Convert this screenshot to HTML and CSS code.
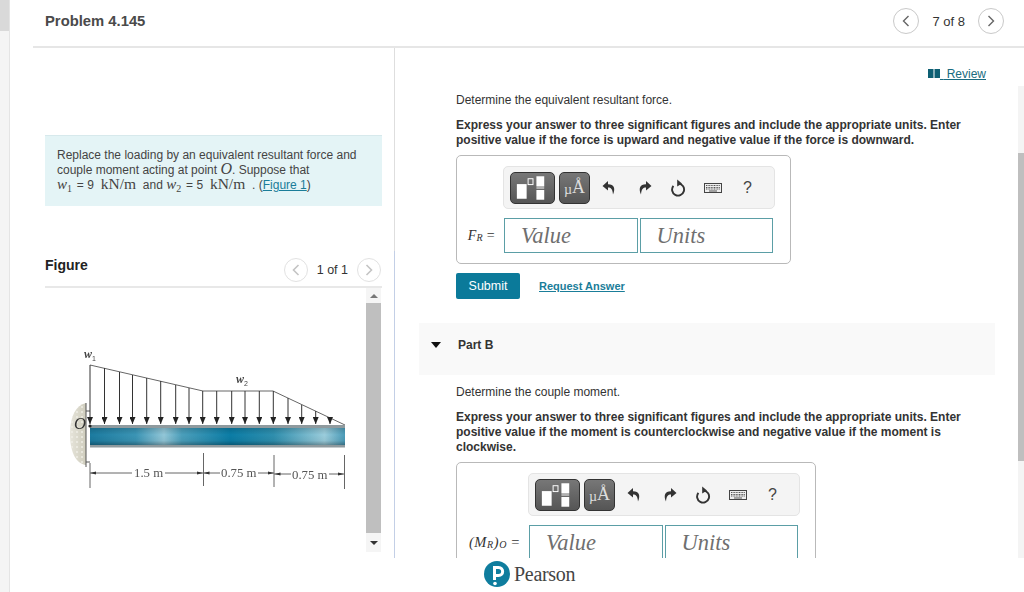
FILE: index.html
```html
<!DOCTYPE html>
<html>
<head>
   <title>Problem 4.145</title>
   <meta name="viewport" content="width=device-width, initial-scale=1">
   <link rel="stylesheet" href="styles.css">
</head>
<body>
   <!-- shared toolbar icons -->
   <svg class="icon-defs" width="0" height="0">
      <symbol id="undo" viewBox="0 0 14 16">
         <path d="M6 1 L0.5 6 L6 10.5 L6 7.5 C9 7.5 10.5 9 11 14.5 C13.5 9 12.5 4.2 6 4.2 Z"/>
      </symbol>
      <symbol id="redo" viewBox="0 0 14 16">
         <path d="M8 1 L13.5 6 L8 10.5 L8 7.5 C5 7.5 3.5 9 3 14.5 C0.5 9 1.5 4.2 8 4.2 Z"/>
      </symbol>
      <symbol id="reset" viewBox="0 0 16 18">
         <path d="M8.8 4.6 A6 6 0 1 1 3.4 6.8" fill="none" stroke="#333" stroke-width="1.9"/>
         <path d="M7.2 0.6 L12 4.4 L7.2 7.4 Z"/>
      </symbol>
      <symbol id="keyboard" viewBox="0 0 18 10">
         <rect x="0.5" y="0.5" width="17" height="9" fill="#eee" stroke="#444"/>
         <path d="M2 2.5 H16 M2 4.5 H16 M2 6 H16" stroke="#555" stroke-dasharray="1 .6"/>
         <path d="M5 8 H13" stroke="#555"/>
      </symbol>
      <symbol id="templates" viewBox="0 0 44 32">
         <rect x="6" y="12" width="10" height="15" fill="#fff"/>
         <rect x="17.500" y="6.500" width="5" height="6" fill="none" stroke="#fff"/>
         <rect x="26" y="4" width="8" height="10.500" fill="#fff"/>
         <rect x="26" y="15.500" width="8" height="1" fill="#fff"/>
         <rect x="26" y="18" width="8" height="10" fill="#fff"/>
      </symbol>
   </svg>

   <div class="sidebar"><div class="sidebar-tab"></div></div>

   <div class="page">
      <header class="top">
         <h1>Problem 4.145</h1>
         <div class="pager">
            <span class="circle"><svg width="8" height="12" viewBox="0 0 8 12"><path d="M6.5 1 L1.5 6 L6.5 11" fill="none" stroke="#666" stroke-width="1.4"/></svg></span>
            <span class="pager-text">7 of 8</span>
            <span class="circle"><svg width="8" height="12" viewBox="0 0 8 12"><path d="M1.5 1 L6.5 6 L1.5 11" fill="none" stroke="#666" stroke-width="1.4"/></svg></span>
         </div>
      </header>

      <div class="columns">
         <div class="left">
            <section class="intro">
               <div class="statement">
                  Replace the loading by an equivalent resultant force and<br>
                  couple moment acting at point <i class="math big">O</i>. Suppose that<br>
                  <i class="math var">w</i><sub class="idx">1</sub> = 9 <span class="math unit">kN/m</span> and <i class="math var">w</i><sub class="idx">2</sub> = 5 <span class="math unit">kN/m</span> . (<a href="#">Figure 1</a>)
               </div>
            </section>

            <section class="figure">
               <div class="figure-head">
                  <h2>Figure</h2>
                  <div class="pager small">
                     <span class="circle"><svg width="8" height="12" viewBox="0 0 8 12"><path d="M6.5 1 L1.5 6 L6.5 11" fill="none" stroke="#c4c4c4" stroke-width="1.6"/></svg></span>
                     <span class="pager-text">1 of 1</span>
                     <span class="circle"><svg width="8" height="12" viewBox="0 0 8 12"><path d="M1.5 1 L6.5 6 L1.5 11" fill="none" stroke="#c4c4c4" stroke-width="1.6"/></svg></span>
                  </div>
               </div>
               <div class="figure-body">
                  <svg class="diagram" width="321" height="264" viewBox="45 288 321 264">
                     <defs>
                        <linearGradient id="beam" x1="0" x2="1" y1="0" y2="0">
                           <stop offset="0" stop-color="#1b7ba0"/>
                           <stop offset="0.18" stop-color="#3b95b5"/>
                           <stop offset="0.29" stop-color="#93c7d8"/>
                           <stop offset="0.36" stop-color="#4b9fbb"/>
                           <stop offset="0.55" stop-color="#0b7da6"/>
                           <stop offset="0.72" stop-color="#2f8fae"/>
                           <stop offset="0.92" stop-color="#9bcddc"/>
                           <stop offset="1" stop-color="#4a9bb8"/>
                        </linearGradient>
                        <linearGradient id="beam-shade" x1="0" x2="0" y1="0" y2="1">
                           <stop offset="0" stop-color="#000" stop-opacity="0.15"/>
                           <stop offset="0.4" stop-color="#000" stop-opacity="0"/>
                           <stop offset="0.75" stop-color="#000" stop-opacity="0.05"/>
                           <stop offset="1" stop-color="#000" stop-opacity="0.3"/>
                        </linearGradient>
                        <linearGradient id="wall-fade" x1="0" x2="1" y1="0" y2="0">
                           <stop offset="0" stop-color="#e6e4da"/>
                           <stop offset="1" stop-color="#cfcdbd"/>
                        </linearGradient>
                        <pattern id="dots" width="5" height="5" patternUnits="userSpaceOnUse">
                           <circle cx="2" cy="2" r="1" fill="#efeee6"/>
                        </pattern>
                        <marker id="head" markerUnits="userSpaceOnUse" markerWidth="7" markerHeight="6" refX="7" refY="3" orient="auto">
                           <path d="M0 0 L7 3 L0 6 Z" fill="#222"/>
                        </marker>
                     </defs>

                     <!-- wall -->
                     <path d="M86 403 C76 405 70 416 70 434 C70 452 76 464 86 465 Z" fill="url(#wall-fade)"/>
                     <path d="M86 403 C76 405 70 416 70 434 C70 452 76 464 86 465 Z" fill="url(#dots)"/>
                     <path d="M86 403 V467 M86 411 H90 M86 462 H90" stroke="#555" fill="none"/>

                     <!-- load outline -->
                     <path d="M90 365 L203 391 H273 L345 425" fill="none" stroke="#666" stroke-width="1"/>
                     <g class="load-arrows">
                        <path d="M90 365 V424"/>
                        <path d="M104.500 368 V424"/>
                        <path d="M119.500 372 V424"/>
                        <path d="M132.500 375 V424"/>
                        <path d="M146.700 378 V424"/>
                        <path d="M160.700 381 V424"/>
                        <path d="M175.700 385 V424"/>
                        <path d="M189 388 V424"/>
                        <path d="M202.700 391 V424"/>
                        <path d="M216.700 391 V424"/>
                        <path d="M231.700 391 V424"/>
                        <path d="M245 391 V424"/>
                        <path d="M259.300 391 V424"/>
                        <path d="M273.300 391 V424"/>
                        <path d="M288 398 V424"/>
                        <path d="M301.700 405 V424"/>
                        <path d="M315.700 411 V424"/>
                        <path d="M330 418 V424"/>
                     </g>

                     <!-- beam -->
                     <rect x="90" y="425" width="255" height="3" fill="#8f9a9e"/>
                     <rect x="90" y="428" width="255" height="17" fill="url(#beam)"/>
                     <rect x="90" y="428" width="255" height="17" fill="url(#beam-shade)"/>
                     <rect x="90" y="445" width="255" height="2.500" fill="#8f9a9e"/>
                     <circle cx="90" cy="426" r="1.600" fill="#222"/>

                     <!-- labels -->
                     <text class="fig-label" x="84" y="358">w</text>
                     <text class="fig-sub" x="92" y="361">1</text>
                     <text class="fig-label" x="236" y="383">w</text>
                     <text class="fig-sub" x="244" y="386">2</text>
                     <text class="fig-o" x="74" y="429">O</text>

                     <!-- dimensions -->
                     <path class="dim" d="M90 463 V488 M203.500 453 V486 M274 455 V487 M344.500 455 V489"/>
                     <path class="dim" d="M90 473 H132 M165 473 H203 M203 473 H220 M258 473 H274 M274 474 H291 M329 474 H344"/>
                     <path d="M90 473 l6 -1.500 v3 Z M203 473 l-6 -1.500 v3 Z M203.500 473 l6 -1.500 v3 Z M274 473 l-6 -1.500 v3 Z M274.500 474 l6 -1.500 v3 Z M344 474 l-6 -1.500 v3 Z" fill="#333"/>
                     <text class="fig-dim" x="134" y="477">1.5 m</text>
                     <text class="fig-dim" x="221" y="477">0.75 m</text>
                     <text class="fig-dim" x="292" y="479">0.75 m</text>
                  </svg>
                  <div class="fig-scroll">
                     <div class="arrow up"></div>
                     <div class="fig-thumb"></div>
                     <div class="arrow down"></div>
                  </div>
               </div>
            </section>
         </div>

         <div class="right">
            <div class="review-row">
               <a href="#" class="review">
                  <svg width="12" height="9" viewBox="0 0 12 9"><path d="M0 0 H5.500 V9 H0 Z M6.500 0 H12 V9 H6.500 Z" fill="#0d5f73"/></svg>
                  <span>&nbsp;Review</span>
               </a>
            </div>

            <div class="part">
               <p class="plain">Determine the equivalent resultant force.</p>
               <p class="strong">Express your answer to three significant figures and include the appropriate units. Enter<br>positive value if the force is upward and negative value if the force is downward.</p>

               <div class="answer-box first">
                  <div class="toolbar">
                     <span class="tool-btn wide"><svg width="44" height="32"><use href="#templates"/></svg></span>
                     <span class="tool-btn narrow"><span class="mu">&micro;</span><span class="ang">&Aring;</span></span>
                     <svg class="t-icon undo" width="14" height="16"><use href="#undo"/></svg>
                     <svg class="t-icon redo" width="14" height="16"><use href="#redo"/></svg>
                     <svg class="t-icon reset" width="16" height="18"><use href="#reset"/></svg>
                     <svg class="t-icon keys" width="18" height="10"><use href="#keyboard"/></svg>
                     <span class="help">?</span>
                  </div>
                  <div class="answer-row">
                     <span class="answer-label"><i>F<sub>R</sub></i> =</span>
                     <span class="field">Value</span>
                     <span class="field">Units</span>
                  </div>
               </div>

               <div class="actions">
                  <button class="submit">Submit</button>
                  <a href="#" class="request">Request Answer</a>
               </div>
            </div>

            <div class="part-band">
               <svg width="10" height="6" viewBox="0 0 10 6"><path d="M0 0 H10 L5 6 Z" fill="#111"/></svg>
               <span>Part B</span>
            </div>

            <div class="part">
               <p class="plain">Determine the couple moment.</p>
               <p class="strong">Express your answer to three significant figures and include the appropriate units. Enter<br>positive value if the moment is counterclockwise and negative value if the moment is<br>clockwise.</p>

               <div class="answer-box second">
                  <div class="toolbar">
                     <span class="tool-btn wide"><svg width="44" height="32"><use href="#templates"/></svg></span>
                     <span class="tool-btn narrow"><span class="mu">&micro;</span><span class="ang">&Aring;</span></span>
                     <svg class="t-icon undo" width="14" height="16"><use href="#undo"/></svg>
                     <svg class="t-icon redo" width="14" height="16"><use href="#redo"/></svg>
                     <svg class="t-icon reset" width="16" height="18"><use href="#reset"/></svg>
                     <svg class="t-icon keys" width="18" height="10"><use href="#keyboard"/></svg>
                     <span class="help">?</span>
                  </div>
                  <div class="answer-row">
                     <span class="answer-label wide-label"><i>(M<sub>R</sub>)<sub>O</sub></i> =</span>
                     <span class="field">Value</span>
                     <span class="field">Units</span>
                  </div>
               </div>
            </div>

            <div class="page-scroll"><div class="page-thumb"></div></div>
         </div>
      </div>

      <footer class="bottom">
         <svg width="26" height="28" viewBox="0 0 26 28">
            <circle cx="13" cy="14" r="13" fill="#0f7d9e"/>
            <path d="M10.500 20 V7.500 H14.500 C20 7.500 20 15.500 14.500 15.500 H11" fill="none" stroke="#fff" stroke-width="3"/>
            <circle cx="11" cy="23.500" r="1.800" fill="#fff"/>
         </svg>
         <span>Pearson</span>
      </footer>
   </div>
</body>
</html>
```

FILE: styles.css
```css
* {
   box-sizing: border-box;
}
html, body {
   margin: 0;
   height: 592px;
   overflow: hidden;
}
body {
   display: flex;
   background: #fff;
   font-family: "Liberation Sans", Arial, sans-serif;
   color: #333;
}
a {
   color: #1a7d99;
}
.icon-defs {
   position: absolute;
}

.sidebar {
   width: 10px;
   background: #f4f4f4;
   border-right: 1px solid #e4e4e4;
}
.sidebar-tab {
   height: 31px;
   background: #d9d9d9;
}
.page {
   width: 1014px;
   display: flex;
   flex-direction: column;
}

.top {
   height: 48px;
   margin-left: 23px;
   padding: 0 20px 4px 12px;
   display: flex;
   align-items: center;
   justify-content: space-between;
   border-bottom: 2px solid #e6e6e6;
}
h1 {
   margin: 0;
   font-size: 14.800px;
   color: #4a4a4a;
}
.pager {
   display: flex;
   align-items: center;
   gap: 13px;
   font-size: 13px;
}
.circle {
   width: 26px;
   height: 26px;
   border: 1px solid #c9c9c9;
   border-radius: 50%;
   display: flex;
   align-items: center;
   justify-content: center;
}
.pager.small {
   gap: 9px;
   font-size: 12.500px;
}
.pager.small .circle {
   width: 24px;
   height: 24px;
   border-color: #e2e2e2;
}

.columns {
   height: 510px;
   display: flex;
   overflow: hidden;
}
.left {
   width: 385px;
}
.intro {
   height: 203px;
   padding: 87px 12px 0 35px;
   border-right: 1px solid #dedede;
}
.statement {
   height: 71px;
   padding: 12px 12px 0;
   background: #e4f4f6;
   border-top: 1px solid #d7e9ec;
   font-size: 12px;
   line-height: 15px;
   color: #444;
   white-space: nowrap;
}
.math {
   font-family: "Liberation Serif", serif;
   line-height: 0;
}
.math.var {
   font-size: 15px;
}
.math.big {
   font-size: 16px;
}
.math.unit {
   margin: 0 3.500px;
   font-size: 15.500px;
}
.idx {
   margin-right: 1.500px;
   font-family: "Liberation Serif", serif;
   font-size: 10px;
   line-height: 0;
}

.figure {
   height: 307px;
   padding-left: 35px;
   border-right: 1px solid #c3cfe6;
}
.figure-head {
   height: 37px;
   width: 337px;
   padding: 3px 1px 0 0;
   display: flex;
   align-items: center;
   justify-content: space-between;
   border-bottom: 2px solid #e8e8e8;
}
h2 {
   margin: 0 0 10px;
   font-size: 14px;
   color: #222;
}
.figure-body {
   display: flex;
}
.diagram {
   display: block;
   filter: blur(0.3px);
}
.fig-scroll {
   width: 15px;
   height: 264px;
   display: flex;
   flex-direction: column;
   background: #f5f5f5;
}
.fig-thumb {
   height: 230px;
   background: #bfbfbf;
}
.arrow {
   height: 15px;
   display: flex;
   align-items: center;
   justify-content: center;
}
.arrow.down {
   height: 19px;
}
.arrow::before {
   content: "";
   border-left: 4px solid transparent;
   border-right: 4px solid transparent;
}
.arrow.up::before {
   border-bottom: 4px solid #777;
}
.arrow.down::before {
   border-top: 4px solid #333;
}
.load-arrows path {
   stroke: #333;
   stroke-width: 1;
   marker-end: url(#head);
}
.dim {
   stroke: #666;
   stroke-width: 1;
   fill: none;
}
.fig-label {
   font: italic bold 12px "Liberation Serif", serif;
   fill: #444;
}
.fig-sub {
   font: 7px "Liberation Sans", sans-serif;
   fill: #444;
}
.fig-o {
   font: italic 16.500px "Liberation Serif", serif;
   fill: #333;
}
.fig-dim {
   font: 12.800px "Liberation Serif", serif;
   fill: #555;
}

.right {
   position: relative;
   flex: 1;
   padding: 0 0 0 24px;
}
.review-row {
   height: 35px;
   padding: 19px 38px 0 0;
   display: flex;
   justify-content: flex-end;
}
.review {
   font-size: 12px;
   color: #1a6b80;
   white-space: nowrap;
}
.part {
   padding-left: 37px;
}
p {
   margin: 0;
   font-size: 12px;
   line-height: 15px;
   color: #333;
}
.plain {
   padding-top: 10px;
}
.strong {
   margin-top: 10px;
   font-weight: bold;
}

.answer-box {
   margin-top: 7px;
   padding: 10px 16px 10px 0;
   border: 1px solid #b9b9b9;
   border-radius: 5px;
}
.answer-box.first {
   width: 335px;
   height: 109px;
   padding-left: 46px;
}
.answer-box.second {
   width: 360px;
   height: 120px;
   padding-left: 71px;
}
.toolbar {
   width: 272px;
   height: 43px;
   padding: 4px 6px;
   display: flex;
   align-items: center;
   position: relative;
   background: #f4f4f4;
   border: 1px solid #e4e4e4;
   border-radius: 5px;
}
.tool-btn {
   height: 32px;
   border: 1px solid #333;
   border-radius: 5px;
   background: linear-gradient(#777, #555);
   color: #ddd;
   display: flex;
   align-items: center;
   justify-content: center;
}
.tool-btn.wide {
   width: 45px;
}
.tool-btn.narrow {
   width: 31px;
   margin-left: 4px;
   font-family: "Liberation Serif", serif;
}
.mu {
   font-size: 14px;
   margin-top: 4px;
}
.ang {
   font-size: 18px;
}
.t-icon {
   fill: #333;
   flex: none;
}
.t-icon.undo {
   margin-left: 12px;
}
.t-icon.redo {
   margin-left: 22px;
}
.t-icon.reset {
   margin-left: 18px;
}
.t-icon.keys {
   margin-left: 18px;
}
.help {
   margin-left: 21px;
   font-size: 16px;
   color: #444;
}
.answer-row {
   margin-top: 9px;
   display: flex;
   align-items: center;
   position: relative;
}
.answer-label {
   position: absolute;
   right: 100%;
   margin-right: 8px;
   font-family: "Liberation Serif", serif;
   font-size: 14px;
   letter-spacing: 0.3px;
   white-space: nowrap;
   color: #333;
}
.answer-label.wide-label {
   font-size: 14.500px;
   letter-spacing: 0.6px;
}
.answer-label sub {
   font-size: 10px;
   line-height: 0;
   vertical-align: -1px;
}
.field {
   width: 134px;
   height: 35px;
   margin-left: 1px;
   margin-right: 1px;
   padding-left: 16px;
   border: 1px solid #5b9ea6;
   font: italic 22.500px/33px "Liberation Serif", serif;
   color: #6f6f6f;
}
.field:first-of-type {
   margin-left: 0;
}

.actions {
   margin-top: 9px;
   display: flex;
   align-items: center;
   gap: 19px;
}
.submit {
   width: 64px;
   height: 26px;
   padding: 0;
   border: none;
   border-radius: 2px;
   background: #0b7a9a;
   color: #fff;
   font: 12.500px "Liberation Sans", Arial, sans-serif;
}
.request {
   font-size: 11px;
   font-weight: bold;
}
.part-band {
   width: 576px;
   height: 52px;
   margin-top: 24px;
   padding: 0 0 9px 12px;
   display: flex;
   align-items: center;
   gap: 17px;
   background: #f9f9f9;
   font-size: 12px;
   font-weight: bold;
}
.page-scroll {
   position: absolute;
   top: 38px;
   right: 0;
   width: 6px;
   height: 473px;
   padding-top: 67px;
   background: #f4f4f4;
}
.page-thumb {
   height: 308px;
   background: #bfbfbf;
}

.bottom {
   height: 34px;
   padding: 0 0 2px 474px;
   display: flex;
   align-items: center;
   gap: 4px;
   font-family: "Liberation Serif", serif;
   font-size: 20px;
   letter-spacing: -0.3px;
   color: #444;
}
```
